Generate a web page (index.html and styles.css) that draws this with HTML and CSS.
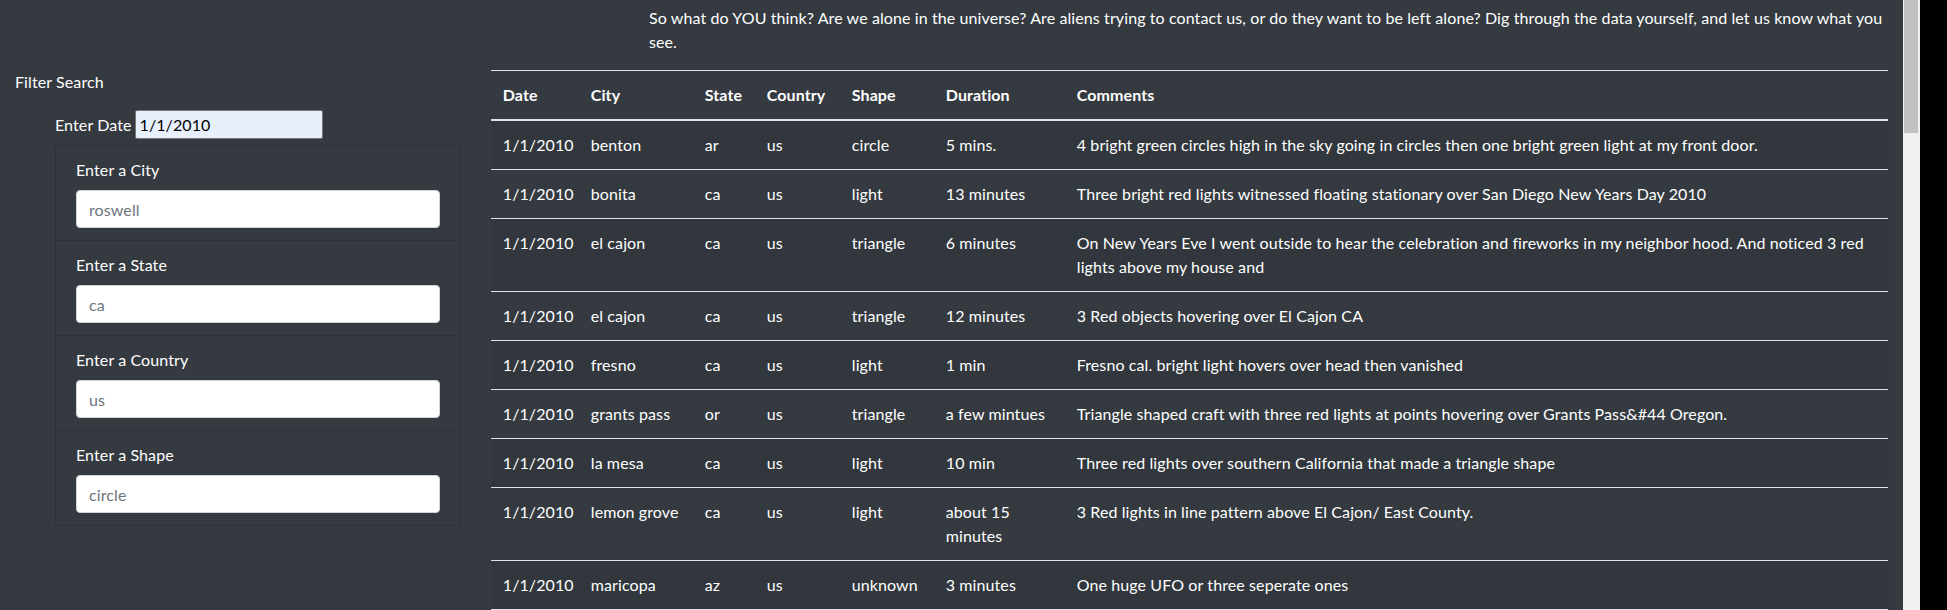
FILE: index.html
```html
<!DOCTYPE html>
<html lang="en">
<head>
<meta charset="utf-8">
<title>UFO Sightings</title>
<link rel="stylesheet" href="styles.css">
</head>
<body>
<div class="screen">
  <div class="page">
    <div class="intro-row">
      <p class="intro">So what do YOU think? Are we alone in the universe? Are aliens trying to contact us, or do they want to be left alone? Dig through the data yourself, and let us know what you see.</p>
    </div>
    <div class="main-row">
      <aside class="sidebar">
        <p class="filter-title">Filter Search</p>
        <ul class="filters">
          <li class="date-item">
            <label for="datetime">Enter Date</label>
            <input id="datetime" class="date-input" type="text" value="1/1/2010">
          </li>
          <li class="group-holder">
            <ul class="list-group">
              <li class="list-item">
                <label class="field-label" for="city">Enter a City</label>
                <input id="city" class="form-control" type="text" placeholder="roswell">
              </li>
              <li class="list-item">
                <label class="field-label" for="state">Enter a State</label>
                <input id="state" class="form-control" type="text" placeholder="ca">
              </li>
              <li class="list-item">
                <label class="field-label" for="country">Enter a Country</label>
                <input id="country" class="form-control" type="text" placeholder="us">
              </li>
              <li class="list-item">
                <label class="field-label" for="shape">Enter a Shape</label>
                <input id="shape" class="form-control" type="text" placeholder="circle">
              </li>
            </ul>
          </li>
        </ul>
      </aside>
      <section class="results">
        <table class="ufo-table">
          <colgroup>
            <col class="c-date"><col class="c-city"><col class="c-state"><col class="c-country"><col class="c-shape"><col class="c-duration"><col class="c-comments">
          </colgroup>
          <thead>
            <tr><th>Date</th><th>City</th><th>State</th><th>Country</th><th>Shape</th><th>Duration</th><th>Comments</th></tr>
          </thead>
          <tbody>
            <tr><td>1/1/2010</td><td>benton</td><td>ar</td><td>us</td><td>circle</td><td>5 mins.</td><td>4 bright green circles high in the sky going in circles then one bright green light at my front door.</td></tr>
            <tr><td>1/1/2010</td><td>bonita</td><td>ca</td><td>us</td><td>light</td><td>13 minutes</td><td>Three bright red lights witnessed floating stationary over San Diego New Years Day 2010</td></tr>
            <tr><td>1/1/2010</td><td>el cajon</td><td>ca</td><td>us</td><td>triangle</td><td>6 minutes</td><td>On New Years Eve I went outside to hear the celebration and fireworks in my neighbor hood. And noticed 3 red lights above my house and</td></tr>
            <tr><td>1/1/2010</td><td>el cajon</td><td>ca</td><td>us</td><td>triangle</td><td>12 minutes</td><td>3 Red objects hovering over El Cajon CA</td></tr>
            <tr><td>1/1/2010</td><td>fresno</td><td>ca</td><td>us</td><td>light</td><td>1 min</td><td>Fresno cal. bright light hovers over head then vanished</td></tr>
            <tr><td>1/1/2010</td><td>grants pass</td><td>or</td><td>us</td><td>triangle</td><td>a few mintues</td><td>Triangle shaped craft with three red lights at points hovering over Grants Pass&amp;#44 Oregon.</td></tr>
            <tr><td>1/1/2010</td><td>la mesa</td><td>ca</td><td>us</td><td>light</td><td>10 min</td><td>Three red lights over southern California that made a triangle shape</td></tr>
            <tr><td>1/1/2010</td><td>lemon grove</td><td>ca</td><td>us</td><td>light</td><td>about 15 minutes</td><td>3 Red lights in line pattern above El Cajon/ East County.</td></tr>
            <tr><td>1/1/2010</td><td>maricopa</td><td>az</td><td>us</td><td>unknown</td><td>3 minutes</td><td>One huge UFO or three seperate ones</td></tr>
          </tbody>
        </table>
      </section>
    </div>
  </div>
  <div class="scrollbar"><div class="thumb"></div></div>
  <div class="edge"></div>
</div>
</body>
</html>
```

FILE: styles.css
```css
html, body {
  margin: 0;
  padding: 0;
  background: #000;
}

.screen {
  display: flex;
  width: 1947px;
  height: 610px;
  overflow: hidden;
}

.page {
  width: 1903px;
  flex: 0 0 1903px;
  height: 610px;
  overflow: hidden;
  background: #343a40;
  color: #fff;
  font-family: Lato, "Liberation Sans", sans-serif;
  font-size: 16px;
  line-height: 1.5;
  letter-spacing: 0.1px;
}

.intro-row {
  padding: 6px 15px 0 649px;
}

.intro {
  margin: 0 0 16px 0;
}

.main-row {
  display: flex;
}

.sidebar {
  width: 475.75px;
  flex: 0 0 475.75px;
  box-sizing: border-box;
  padding: 0 15px;
}

.filter-title {
  margin: 0 0 16px 0;
}

.filters {
  list-style: none;
  margin: 0;
  padding: 0 0 0 40px;
}

.date-item {
  display: flex;
  align-items: center;
  gap: 3px;
  height: 29px;
  margin-bottom: 6px;
}

.date-input {
  box-sizing: border-box;
  width: 188px;
  height: 29px;
  margin: 0;
  padding: 0 4px;
  border: 1px solid #767676;
  border-radius: 2px;
  background: #e8f0fe;
  color: #000;
  font-family: Lato, "Liberation Sans", sans-serif;
  font-size: 16px;
  letter-spacing: 0.1px;
}

.list-group {
  list-style: none;
  margin: 0;
  padding: 0;
}

.list-item {
  border: 1px solid rgba(0, 0, 0, 0.125);
  padding: 12px 20px;
  background: #343a40;
}

.list-item + .list-item {
  border-top-width: 0;
}

.list-item:first-child {
  border-radius: 4px 4px 0 0;
}

.list-item:last-child {
  border-radius: 0 0 4px 4px;
}

.field-label {
  display: block;
  margin-bottom: 8px;
}

.form-control {
  display: block;
  box-sizing: border-box;
  width: 100%;
  height: 38px;
  margin: 0;
  padding: 6px 12px;
  border: 1px solid #ced4da;
  border-radius: 4px;
  background: #fff;
  color: #495057;
  font-family: Lato, "Liberation Sans", sans-serif;
  font-size: 16px;
  line-height: 1.5;
  letter-spacing: 0.1px;
}

.form-control::placeholder {
  color: #6c757d;
  opacity: 1;
}

.results {
  flex: 1 1 auto;
  box-sizing: border-box;
  padding: 0 15px;
}

.ufo-table {
  width: 100%;
  border-collapse: collapse;
  table-layout: fixed;
  color: #fff;
}

.c-date { width: 88px; }
.c-city { width: 114px; }
.c-state { width: 62px; }
.c-country { width: 85px; }
.c-shape { width: 94px; }
.c-duration { width: 131px; }

.ufo-table th,
.ufo-table td {
  padding: 12px;
  text-align: left;
  vertical-align: top;
  border-top: 1px solid #dee2e6;
}

.ufo-table th {
  font-weight: 700;
  vertical-align: bottom;
  border-bottom: 2px solid #dee2e6;
}

.ufo-table tbody tr:nth-child(odd) {
  background: rgba(0, 0, 0, 0.05);
}

.ufo-table tbody tr:last-child td {
  border-bottom: 1px solid #dee2e6;
}

.scrollbar {
  flex: 0 0 17px;
  width: 17px;
  box-sizing: border-box;
  padding: 0 2px 0 1px;
  background: #f1f1f1;
}

.thumb {
  height: 133px;
  background: #c1c1c1;
}

.edge {
  flex: 0 0 27px;
  background: #000;
}
```
